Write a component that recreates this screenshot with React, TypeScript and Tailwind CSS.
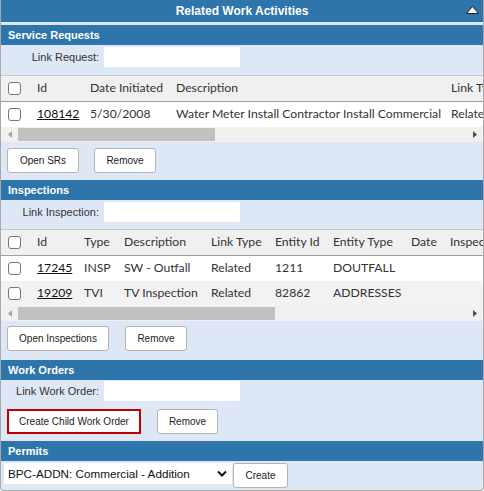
import React from 'react'

const blue = 'bg-[#2e75ab]'

function Box() {
  return <span className="inline-block size-[13px] shrink-0 rounded-[3px] border border-[#767676] bg-white" />
}

function SectionHead({ title }: { title: string }) {
  return (
    <div className={`${blue} h-5 px-[7px] flex items-center text-white font-bold text-[11px]`}>
      {title}
    </div>
  )
}

function LinkRow({ label, h }: { label: string; h: string }) {
  return (
    <div className={`flex items-center ${h} gap-[5px]`}>
      <span className="w-[98px] text-right text-[11px] text-[#333]">{label}</span>
      <span className="w-[136px] h-[20px] bg-white" />
    </div>
  )
}

function Btn({ children, w, red }: { children: React.ReactNode; w: string; red?: boolean }) {
  return (
    <button
      className={`${w} h-[25px] bg-white text-[10px] text-[#222] font-['Liberation_Sans',Arial,sans-serif] ${
        red ? 'border-2 border-[#c00000]' : 'border border-[#b4b4b4] rounded-[3px]'
      }`}>
      {children}
    </button>
  )
}

function ScrollBar({ thumb }: { thumb: string }) {
  return (
    <div className="h-[15px] bg-[#f0f0f0] flex items-center">
      <span className="w-[17px] flex justify-center">
        <svg width="4" height="7" viewBox="0 0 4 7">
          <path d="M4 0 L0 3.5 L4 7Z" fill="#a3a3a3" />
        </svg>
      </span>
      <span className={`${thumb} h-[13px] bg-[#c1c1c1]`} />
      <span className="flex-1" />
      <span className="w-[17px] flex justify-center">
        <svg width="4" height="7" viewBox="0 0 4 7">
          <path d="M0 0 L4 3.5 L0 7Z" fill="#505050" />
        </svg>
      </span>
    </div>
  )
}

type Col = { w: string; label: string }

function Grid({ cols, rows, thumb }: { cols: Col[]; rows: string[][]; thumb: string }) {
  return (
    <div className="font-['Lato','Open_Sans',sans-serif] text-[12.2px] text-[#333]">
      <div className="overflow-hidden">
        <div className="flex items-center h-[27px] bg-[#f0f0f0] border-t border-[#c8c8c8] border-b border-b-[#a0a0a0] whitespace-nowrap">
          <span className="w-[36px] shrink-0 pl-[7px] flex">
            <Box />
          </span>
          {cols.map((c) => (
            <span key={c.label} className={`${c.w} shrink-0`}>
              {c.label}
            </span>
          ))}
        </div>
        {rows.map((r, i) => (
          <div
            key={i}
            className={`flex items-center h-[25px] whitespace-nowrap ${i % 2 ? 'bg-[#f2f2f2]' : 'bg-white'}`}>
            <span className="w-[36px] shrink-0 pl-[7px] flex">
              <Box />
            </span>
            {r.map((v, j) => (
              <span key={j} className={`${cols[j].w} shrink-0 ${j === 0 ? 'underline text-[#111]' : ''}`}>
                {v}
              </span>
            ))}
          </div>
        ))}
      </div>
      <ScrollBar thumb={thumb} />
    </div>
  )
}

export default function App() {
  return (
    <div className="w-[484px] h-[491px] bg-white">
      <div className="w-[484px] h-[491px] border-x border-b border-[#a9a9a9] rounded-b-[4px] bg-[#dee7f5] overflow-hidden font-['Liberation_Sans',Arial,sans-serif]">
        <div className={`${blue} h-[22px] relative flex items-center justify-center text-white font-bold text-[12px]`}>
          Related Work Activities
          <svg className="absolute right-[4px] top-[6px]" width="13" height="8" viewBox="0 0 13 8">
            <path d="M6.5 0.5 L12.5 7.5 L0.5 7.5Z" fill="#fff" stroke="#222" strokeWidth="1" />
          </svg>
        </div>
        <div className="h-[3px]" />

        <SectionHead title="Service Requests" />
        <LinkRow label="Link Request:" h="h-[24px] mb-[6px]" />
        <Grid
          cols={[
            { w: 'w-[53px]', label: 'Id' },
            { w: 'w-[86px]', label: 'Date Initiated' },
            { w: 'w-[275px]', label: 'Description' },
            { w: 'w-[80px]', label: 'Link Type' },
          ]}
          rows={[['108142', '5/30/2008', 'Water Meter Install Contractor Install Commercial', 'Related']]}
          thumb="w-[197px]"
        />
        <div className="flex items-start gap-[15px] px-[6px] pt-[6px] h-[38px]">
          <Btn w="w-[72px]">Open SRs</Btn>
          <Btn w="w-[62px]">Remove</Btn>
        </div>

        <SectionHead title="Inspections" />
        <LinkRow label="Link Inspection:" h="h-[24px] mb-[5px]" />
        <Grid
          cols={[
            { w: 'w-[47px]', label: 'Id' },
            { w: 'w-[40px]', label: 'Type' },
            { w: 'w-[87px]', label: 'Description' },
            { w: 'w-[64px]', label: 'Link Type' },
            { w: 'w-[58px]', label: 'Entity Id' },
            { w: 'w-[78px]', label: 'Entity Type' },
            { w: 'w-[39px]', label: 'Date' },
            { w: 'w-[80px]', label: 'Inspector' },
          ]}
          rows={[
            ['17245', 'INSP', 'SW - Outfall', 'Related', '1211', 'DOUTFALL', '', ''],
            ['19209', 'TVI', 'TV Inspection', 'Related', '82862', 'ADDRESSES', '', ''],
          ]}
          thumb="w-[257px]"
        />
        <div className="flex items-start gap-[16px] px-[6px] pt-[5px] h-[39px]">
          <Btn w="w-[102px]">Open Inspections</Btn>
          <Btn w="w-[62px]">Remove</Btn>
        </div>

        <SectionHead title="Work Orders" />
        <LinkRow label="Link Work Order:" h="h-[22px]" />
        <div className="flex items-start gap-[16px] px-[6px] pt-[7px] h-[39px]">
          <Btn w="w-[134px]" red>
            Create Child Work Order
          </Btn>
          <Btn w="w-[61px]">Remove</Btn>
        </div>

        <SectionHead title="Permits" />
        <div className="flex items-start pl-[3px] pt-[2px] gap-[1px]">
          <div className="w-[228px] h-[21px] bg-white flex items-center pl-[4px] pr-[5px] text-[11.7px] text-[#111]">
            <span className="flex-1">BPC-ADDN: Commercial - Addition</span>
            <svg width="10" height="7" viewBox="0 0 10 7">
              <path d="M1 1.5 L5 5.5 L9 1.5" fill="none" stroke="#111" strokeWidth="2" />
            </svg>
          </div>
          <Btn w="w-[55px]">Create</Btn>
        </div>
      </div>
    </div>
  )
}
